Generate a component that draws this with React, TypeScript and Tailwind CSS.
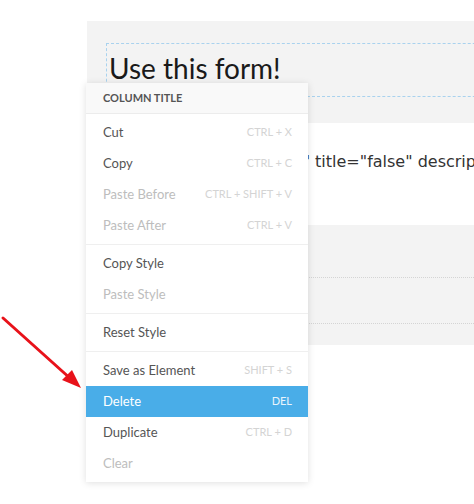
import React from "react";

type Item = { label: string; shortcut?: string; disabled?: boolean; active?: boolean };

const sections: Item[][] = [
  [
    { label: "Cut", shortcut: "CTRL + X" },
    { label: "Copy", shortcut: "CTRL + C" },
    { label: "Paste Before", shortcut: "CTRL + SHIFT + V", disabled: true },
    { label: "Paste After", shortcut: "CTRL + V", disabled: true },
  ],
  [
    { label: "Copy Style" },
    { label: "Paste Style", disabled: true },
  ],
  [{ label: "Reset Style" }],
  [
    { label: "Save as Element", shortcut: "SHIFT + S" },
    { label: "Delete", shortcut: "DEL", active: true },
    { label: "Duplicate", shortcut: "CTRL + D" },
    { label: "Clear", disabled: true },
  ],
];

function Row({ item }: { item: Item }) {
  const base = "flex h-[31px] items-center justify-between pl-[17px] pr-[16px]";
  if (item.active) {
    return (
      <div className={`${base} bg-[#49ade8]`}>
        <span className="text-[13px] text-white">{item.label}</span>
        <span className="text-[11px] text-[#e8f4fc]">{item.shortcut}</span>
      </div>
    );
  }
  return (
    <div className={base}>
      <span className={item.disabled ? "text-[13px] text-[#bdbdbd]" : "text-[13px] text-[#555555]"}>
        {item.label}
      </span>
      {item.shortcut && <span className="text-[11px] text-[#d4d4d4]">{item.shortcut}</span>}
    </div>
  );
}

export default function App() {
  return (
    <div className="relative h-[504px] w-[474px] overflow-hidden bg-white">
      <div className="pl-[87px] pt-[21px]">
        <div className="h-[102px] bg-[#f3f3f3] pl-[19px] pt-[22px]">
          <div className="h-[54px] w-[420px] border border-dashed border-[#a9d2ee] pl-[2px] pt-[10px]">
            <div
              className="text-[28px] leading-[28px] text-[#1a1a1a]"
              style={{ fontFamily: "Lato, 'Open Sans', sans-serif" }}
            >
              Use this form!
            </div>
          </div>
        </div>
        <div className="h-[102px] overflow-hidden whitespace-nowrap pt-[27px]">
          <div
            className="text-[16px] leading-[24px] text-[#333333]"
            style={{ fontFamily: "'DejaVu Sans', sans-serif" }}
          >
            <span className="inline-block w-[223px] text-right">id="1"</span>
            {' title="false" description="false"]'}
          </div>
        </div>
        <div className="h-[120px] bg-[#f3f3f3] pl-[19px] pt-[52px]">
          <div className="h-[47px] w-[420px] border-y border-dotted border-[#d4d4d4]" />
        </div>
      </div>

      <div
        className="absolute left-[86px] top-[83px] w-[222px] bg-white shadow-[0_1px_7px_rgba(0,0,0,0.13)]"
        style={{ fontFamily: "Lato, 'Open Sans', sans-serif" }}
      >
        <div className="flex h-[31px] items-center border-b border-[#ececec] bg-[#f9f9f9] pl-[17px] text-[11px] font-bold text-[#555555]">
          COLUMN TITLE
        </div>
        {sections.map((sec, i) => (
          <div key={i} className={i < sections.length - 1 ? "border-b border-[#efefef] py-[3px]" : "py-[3px]"}>
            {sec.map((it) => (
              <Row key={it.label} item={it} />
            ))}
          </div>
        ))}
      </div>

      <svg className="absolute left-0 top-0" width="474" height="504" viewBox="0 0 474 504">
        <line x1="3" y1="318" x2="72" y2="380" stroke="#e8121a" strokeWidth="3" strokeLinecap="round" />
        <polygon points="81,388 62,380 72,370" fill="#e8121a" />
      </svg>
    </div>
  );
}
